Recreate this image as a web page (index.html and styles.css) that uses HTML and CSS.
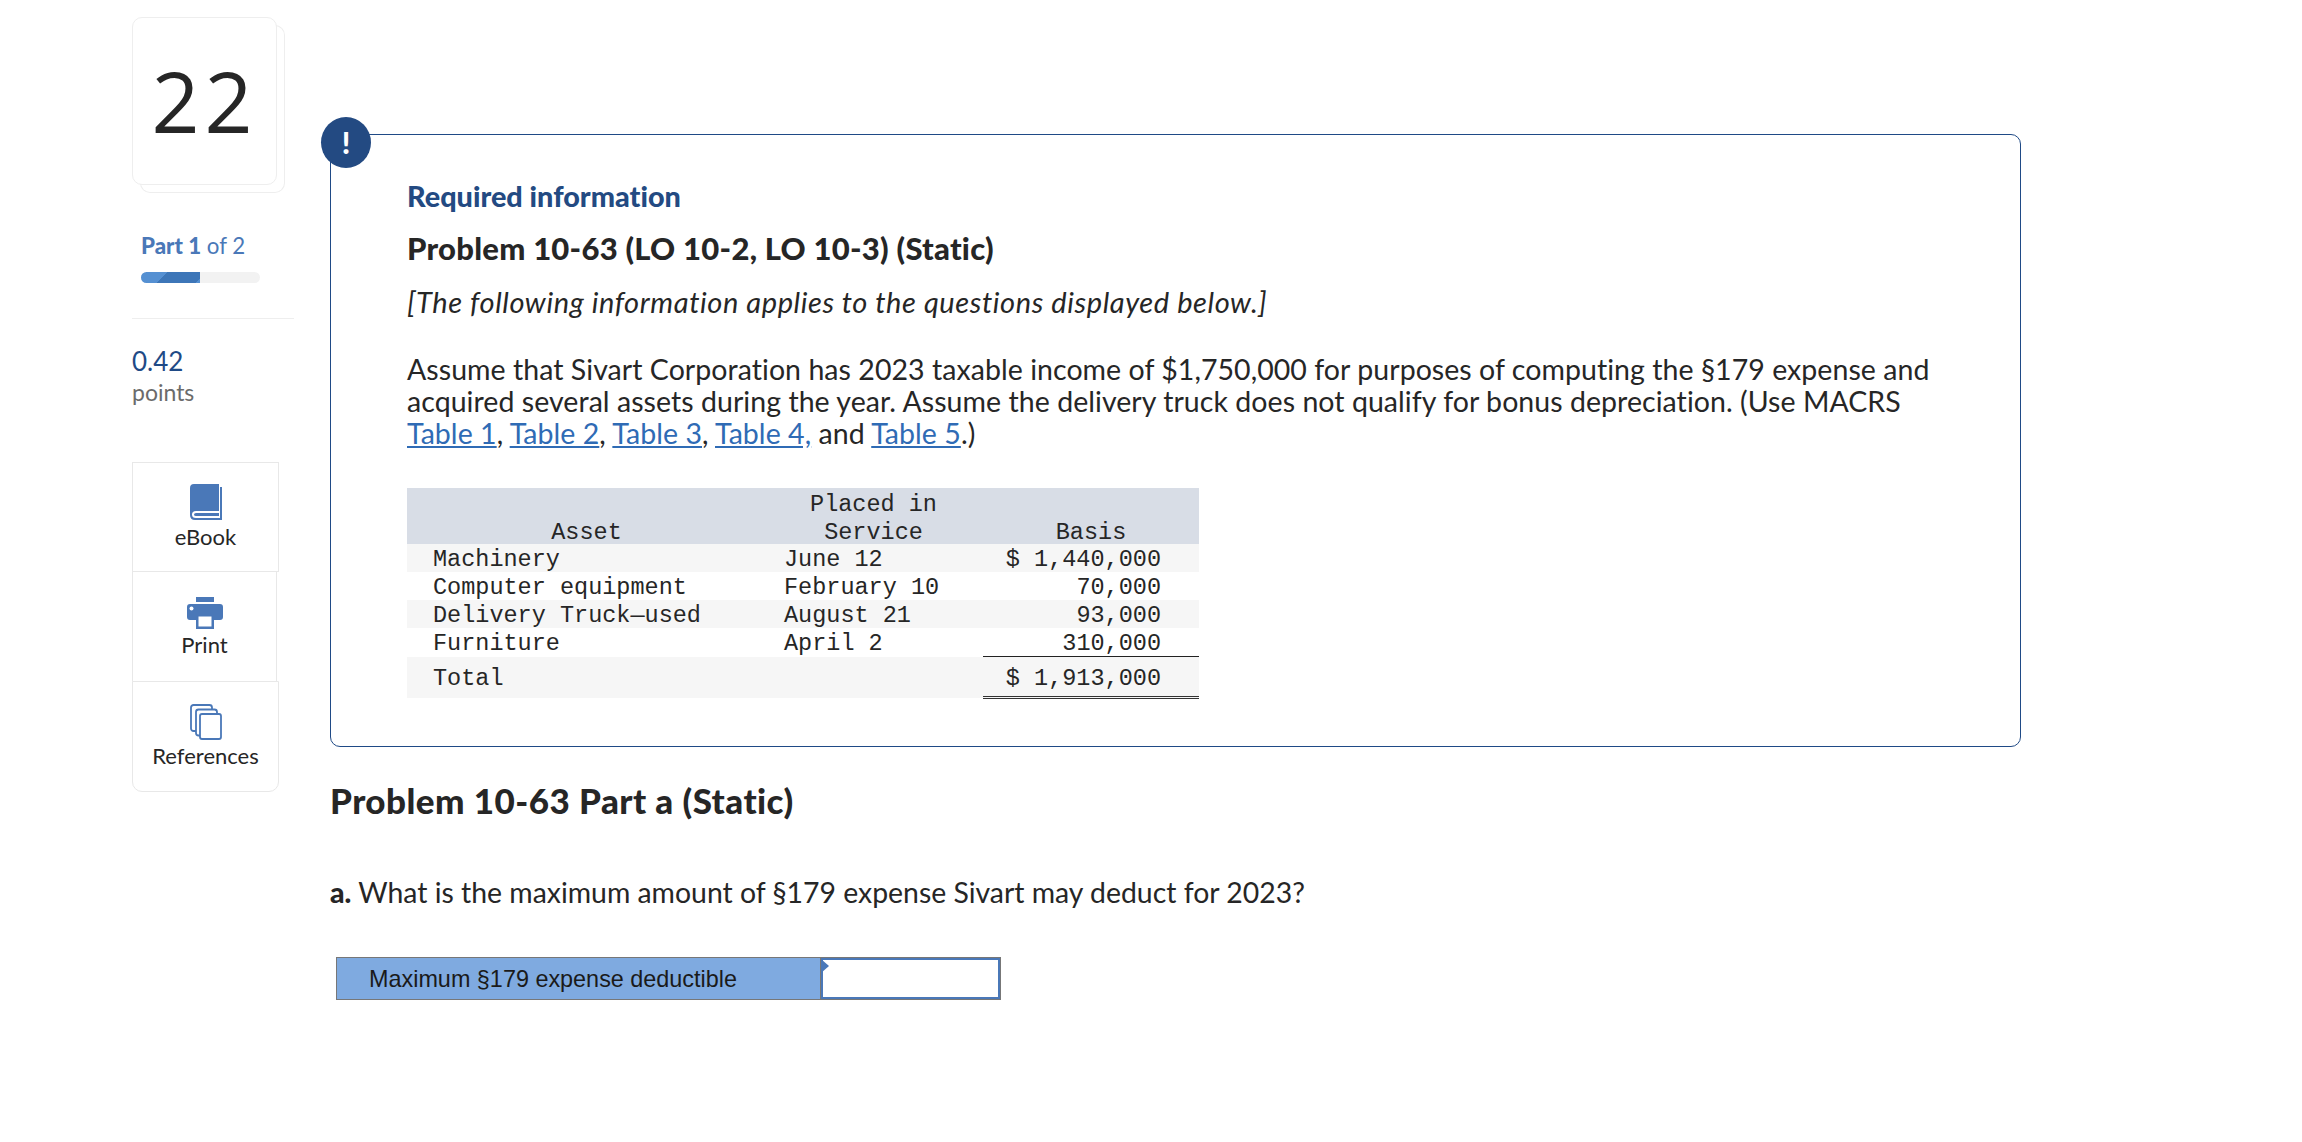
FILE: index.html
```html
<!DOCTYPE html>
<html lang="en">
<head>
<meta charset="utf-8">
<title>Problem 10-63</title>
<link rel="stylesheet" href="styles.css">
</head>
<body>
<div class="page">
  <aside class="sidebar">
    <div class="qcard"><div class="qnum">22</div></div>
    <div class="part"><div class="part-text"><b>Part 1</b> of 2</div>
      <div class="bar"><div class="bar-fill"></div></div></div>
    <div class="points"><div class="pts-val">0.42</div><div class="pts-lab">points</div></div>
    <div class="tools">
      <div class="tool tool-wide">
        <svg class="icon" viewBox="0 0 32 36"><path fill="#4a78b8" d="M4 0H29V27H6Q2 27 2 30.500Q2 34 6 34H32V36H5Q0 36 0 31V4Q0 0 4 0ZM30 3H32V34H30ZM6 29H29V32H6Q4 32 4 30.500Q4 29 6 29Z"/></svg>
        <div class="tool-label">eBook</div>
      </div>
      <div class="tool tool-narrow">
        <svg class="icon-print" viewBox="0 0 36 32"><path fill="#4a78b8" d="M9 0H27V5H9ZM3 7H33Q36 7 36 10V20Q36 23 33 23H27V17H9V23H3Q0 23 0 20V10Q0 7 3 7Z"/><circle cx="4.500" cy="11.500" r="2" fill="#fff"/><path fill="none" stroke="#4a78b8" stroke-width="2.500" d="M10.250 18.250H25.750V30.750H10.250Z"/></svg>
        <div class="tool-label">Print</div>
      </div>
      <div class="tool tool-wide tool-last">
        <svg class="icon" viewBox="0 0 32 36"><g fill="#fff" stroke="#4a78b8" stroke-width="1.800"><rect x="1" y="1" width="21" height="26" rx="2.500"/><rect x="6" y="5.500" width="21" height="26" rx="2.500"/><rect x="10" y="10" width="21" height="25" rx="2"/></g></svg>
        <div class="tool-label">References</div>
      </div>
    </div>
  </aside>
  <main class="main">
    <section class="info">
      <div class="alert">!</div>
      <h2 class="req">Required information</h2>
      <h3 class="prob">Problem 10-63 (LO 10-2, LO 10-3) (Static)</h3>
      <p class="note">[The following information applies to the questions displayed below.]</p>
      <p class="body">Assume that Sivart Corporation has 2023 taxable income of $1,750,000 for purposes of computing the §179 expense and acquired several assets during the year. Assume the delivery truck does not qualify for bonus depreciation. (Use MACRS <a href="#">Table 1</a>, <a href="#">Table 2</a>, <a href="#">Table 3</a>, <a href="#">Table 4,</a> and <a href="#">Table 5</a>.)</p>
      <table class="assets">
        <colgroup><col class="c1"><col class="c2"><col class="c3"></colgroup>
        <thead><tr><th class="h1"><div class="hd">Asset</div></th><th class="h2"><div class="hd">Placed in<br>Service</div></th><th><div class="hd">Basis</div></th></tr></thead>
        <tbody>
          <tr class="alt"><td>Machinery</td><td>June 12</td><td class="num">$ 1,440,000</td></tr>
          <tr><td>Computer equipment</td><td>February 10</td><td class="num">70,000</td></tr>
          <tr class="alt"><td>Delivery Truck—used</td><td>August 21</td><td class="num">93,000</td></tr>
          <tr><td>Furniture</td><td>April 2</td><td class="num">310,000</td></tr>
          <tr class="alt total"><td>Total</td><td></td><td class="num grand">$ 1,913,000</td></tr>
        </tbody>
      </table>
    </section>
    <h2 class="parta">Problem 10-63 Part a (Static)</h2>
    <p class="question"><b>a.</b> What is the maximum amount of §179 expense Sivart may deduct for 2023?</p>
    <div class="answer">
      <div class="ans-label">Maximum §179 expense deductible</div>
      <div class="ans-input"></div>
    </div>
  </main>
</div>
</body>
</html>
```

FILE: styles.css
```css
* { box-sizing: border-box; }
html, body { margin: 0; padding: 0; background: #fff; }
body { font-family: "Lato", "Liberation Sans", sans-serif; font-variant-ligatures: none; color: #262626; height: 1142px; overflow: hidden; }
.page { display: flex; align-items: flex-start; padding: 17px 0 0 132px; }
.sidebar { width: 162px; flex: none; }
.qcard { width: 145px; height: 168px; border: 1px solid #eee; border-radius: 10px; background: #fff; box-shadow: 8px 8px 0 -1px #fff, 8px 8px 0 0 #eee; display: flex; justify-content: center; padding-top: 37px; }
.qnum { font-family: "Open Sans", sans-serif; font-size: 84px; line-height: 92px; letter-spacing: 5px; color: #262626; }
.part { padding: 48px 0 35px 9px; border-bottom: 1px solid #eee; }
.part-text { font-size: 22.300px; line-height: 26px; color: #4a78b8; }
.part-text b { font-weight: 900; }
.bar { width: 119px; height: 11px; margin-top: 13px; background: #f2f2f2; border-radius: 6px; overflow: hidden; }
.bar-fill { width: 59px; height: 11px; background: linear-gradient(135deg, #5590d2 38%, #3d76b8 38%, #3d76b8 94%, #5590d2 94%); }
.points { padding-top: 26px; }
.pts-val { font-size: 26px; line-height: 32px; color: #1f4a86; }
.pts-lab { font-size: 23px; line-height: 30px; color: #6b6b6b; }
.tools { margin-top: 56px; width: 147px; }
.tool { height: 110px; border: 1px solid #e8e8e8; display: flex; flex-direction: column; align-items: center; background: #fff; margin-top: -1px; padding-top: 21px; }
.tool-narrow { width: 145px; padding-top: 25px; height: 111px; }
.tool-wide { width: 147px; }
.tool-last { border-radius: 0 0 10px 10px; height: 111px; padding-top: 22px; }
.icon { display: block; width: 32px; height: 36px; }
.icon-print { display: block; width: 36px; height: 32px; }
.tool-label { font-size: 22px; line-height: 24px; margin-top: 5px; color: #262626; }
.tool-narrow .tool-label { margin-top: 4px; }
.tool-last .tool-label { margin-top: 4px; }
.main { margin-left: 36px; width: 1691px; padding-top: 117px; }
.info { position: relative; border: 1px solid #1f4a86; border-radius: 10px; height: 613px; padding: 45px 60px 0 76px; }
.alert { position: absolute; left: -10px; top: -18px; width: 50px; height: 51px; border-radius: 50%; background: #234a82; color: #fff; font: 900 30px/50px "Lato", sans-serif; text-align: center; }
.req { margin: 0; font-size: 28.800px; line-height: 32px; font-weight: 900; color: #234a82; }
.prob { margin: 19px 0 0; font-size: 31px; line-height: 34px; font-weight: 900; letter-spacing: 0.250px; color: #262626; }
.note { margin: 20px 0 0; font-size: 29px; line-height: 34px; font-style: italic; letter-spacing: 0.600px; }
.body { margin: 34px 0 0; font-size: 28.500px; line-height: 32px; letter-spacing: 0.050px; }
.body a { color: #2f6bb5; text-decoration: underline; }
.assets { margin-top: 39px; border-collapse: collapse; table-layout: fixed; width: 792px; font-family: "Liberation Mono", monospace; font-size: 23.500px; line-height: 25px; color: #262626; }
.c1 { width: 377px; } .c2 { width: 199px; } .c3 { width: 216px; }
.assets th { background: #d8dde6; font-weight: 400; vertical-align: bottom; text-align: center; padding: 0; height: 56px; line-height: 28px; }
.assets th.h1 { padding-right: 18px; }
.assets th.h2 { padding-right: 20px; }
.hd { margin: 3px 0 -3px; }
.assets td { padding: 3px 0 0; height: 28px; white-space: nowrap; }
.assets td:first-child { padding-left: 26px; }
.alt td { background: #f6f6f6; }
.num { text-align: right; padding-right: 38px !important; }
.total td { height: 41px; }
.grand { border-top: 1px solid #222; border-bottom: 3px double #333; }
.parta { margin: 34px 0 0; font-size: 35px; line-height: 38px; font-weight: 900; letter-spacing: 0.450px; }
.question { margin: 56px 0 0; font-size: 28.400px; line-height: 34px; }
.question b { font-weight: 900; }
.answer { display: flex; margin: 48px 0 0 6px; width: 665px; height: 43px; border: 1px solid #777; }
.ans-label { width: 484px; background: #7faae0; font-family: "Liberation Sans", sans-serif; font-size: 23.400px; line-height: 42px; padding-left: 32px; color: #1a1a1a; border-right: 1px solid #777; }
.ans-input { position: relative; flex: 1; border: 2px solid #4a78b8; background: #fff; }
.ans-input::before { content: ""; position: absolute; left: -2px; top: -1px; border-left: 8px solid #4a78b8; border-top: 7px solid transparent; border-bottom: 7px solid transparent; }
```
